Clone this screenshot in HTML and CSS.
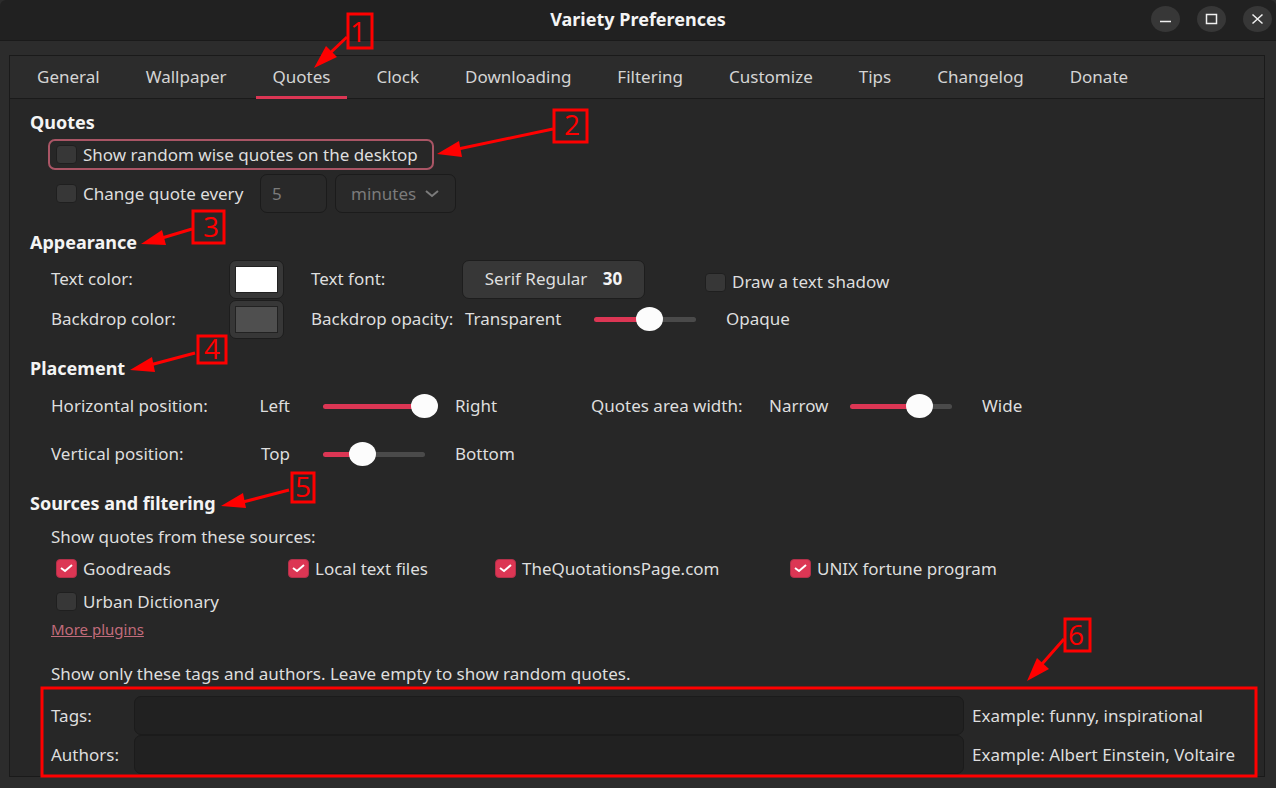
FILE: index.html
```html
<!DOCTYPE html>
<html lang="en">
<head>
    <meta charset="UTF-8">
    <meta name="viewport" content="width=device-width, initial-scale=1.0">
    <title>Variety Preferences</title>
    <link rel="stylesheet" href="styles.css">
</head>
<body>
    <header class="titlebar">
        <h1 class="title">Variety Preferences</h1>
        <div class="window-buttons">
            <button type="button" class="window-button" aria-label="Minimize">
                <svg width="29" height="26" viewBox="0 0 29 26"><path d="M9 15.5h11" /></svg>
            </button>
            <button type="button" class="window-button" aria-label="Maximize">
                <svg width="29" height="26" viewBox="0 0 29 26"><path d="M9.5 8.5h10v9h-10z" /></svg>
            </button>
            <button type="button" class="window-button" aria-label="Close">
                <svg width="29" height="26" viewBox="0 0 29 26"><path d="M9.5 8.5l10 9M19.5 8.5l-10 9" /></svg>
            </button>
        </div>
    </header>

    <main class="notebook">
        <nav class="tabs">
            <a href="#general" class="tab">General</a>
            <a href="#wallpaper" class="tab">Wallpaper</a>
            <a href="#quotes" class="tab active">Quotes</a>
            <a href="#clock" class="tab">Clock</a>
            <a href="#downloading" class="tab">Downloading</a>
            <a href="#filtering" class="tab">Filtering</a>
            <a href="#customize" class="tab">Customize</a>
            <a href="#tips" class="tab">Tips</a>
            <a href="#changelog" class="tab">Changelog</a>
            <a href="#donate" class="tab">Donate</a>
        </nav>

        <form class="page">
            <h2 class="heading">Quotes</h2>
            <label class="check focused"><input type="checkbox" class="box">Show random wise quotes on the desktop</label>
            <div class="interval">
                <label class="check"><input type="checkbox" class="box">Change quote every</label>
                <input type="text" class="entry number" value="5" aria-label="Interval" disabled>
                <div class="dropdown">
                    <select class="select" aria-label="Interval unit" disabled>
                        <option>minutes</option>
                    </select>
                    <svg class="chevron" width="16" height="10" viewBox="0 0 16 10"><path d="M2 2l6 5 6-5" /></svg>
                </div>
            </div>

            <h2 class="heading">Appearance</h2>
            <div class="appearance">
                <label for="text-color">Text color:</label>
                <input type="color" id="text-color" class="color" value="#ffffff">
                <label for="text-font">Text font:</label>
                <button type="button" id="text-font" class="font-button">Serif Regular <b>30</b></button>
                <label class="check shadow"><input type="checkbox" class="box">Draw a text shadow</label>

                <label for="backdrop-color">Backdrop color:</label>
                <input type="color" id="backdrop-color" class="color" value="#4f4f4f">
                <label for="opacity">Backdrop opacity:</label>
                <div class="opacity">
                    <span class="low">Transparent</span>
                    <span class="slider" style="--fill: 54%"><input type="range" id="opacity" value="54"></span>
                    <span class="high">Opaque</span>
                </div>
            </div>

            <h2 class="heading">Placement</h2>
            <div class="placement">
                <label for="horizontal">Horizontal position:</label>
                <span class="side">Left</span>
                <span class="slider" style="--fill: 100%"><input type="range" id="horizontal" value="100"></span>
                <span>Right</span>
                <label for="area-width">Quotes area width:</label>
                <span>Narrow</span>
                <span class="slider" style="--fill: 68%"><input type="range" id="area-width" value="68"></span>
                <span>Wide</span>

                <label for="vertical">Vertical position:</label>
                <span class="side">Top</span>
                <span class="slider" style="--fill: 39%"><input type="range" id="vertical" value="39"></span>
                <span>Bottom</span>
            </div>

            <h2 class="heading">Sources and filtering</h2>
            <p class="text">Show quotes from these sources:</p>
            <div class="sources">
                <label class="check"><input type="checkbox" class="box" checked>Goodreads</label>
                <label class="check"><input type="checkbox" class="box" checked>Local text files</label>
                <label class="check"><input type="checkbox" class="box" checked>TheQuotationsPage.com</label>
                <label class="check"><input type="checkbox" class="box" checked>UNIX fortune program</label>
                <label class="check"><input type="checkbox" class="box">Urban Dictionary</label>
            </div>
            <a href="#plugins" class="link">More plugins</a>
            <p class="text hint">Show only these tags and authors. Leave empty to show random quotes.</p>
            <div class="filters">
                <label for="tags">Tags:</label>
                <input type="text" id="tags" class="entry">
                <span class="example">Example: funny, inspirational</span>
                <label for="authors">Authors:</label>
                <input type="text" id="authors" class="entry">
                <span class="example">Example: Albert Einstein, Voltaire</span>
            </div>
        </form>
    </main>

    <!-- numbered callouts -->
    <svg class="callouts" width="1276" height="788" viewBox="0 0 1276 788">
        <g class="frame">
            <rect x="348" y="14" width="24" height="34" />
            <rect x="554" y="110" width="33" height="32" />
            <rect x="193" y="211" width="31" height="32" />
            <rect x="198" y="336" width="28" height="27" />
            <rect x="292" y="473" width="22" height="29" />
            <rect x="1065" y="619" width="25" height="32" />
            <rect x="42" y="688" width="1214" height="88" />
            <path d="M347 37L328 55M553 129L458 149M192 229L162 238M195 353L150 365M289 490L243 502M1064 639L1042 664" />
        </g>
        <g class="head">
            <path d="M314 68l12-22 11 11z" />
            <path d="M437 154l22-13 3 16z" />
            <path d="M141 244l21-14 4 15z" />
            <path d="M130 370l22-13 3 15z" />
            <path d="M221 506l22-13 3 15z" />
            <path d="M1027 681l10-23 12 11z" />
        </g>
        <g class="digit">
            <text x="358" y="42">1</text>
            <text x="572" y="135">2</text>
            <text x="211" y="237">3</text>
            <text x="212" y="359">4</text>
            <text x="303" y="497">5</text>
            <text x="1076" y="645">6</text>
        </g>
    </svg>
</body>
</html>
```
FILE: styles.css
```css
* {
    box-sizing: border-box;
}
body {
    margin: 0;
    min-height: 100vh;
    position: relative;
    display: flex;
    flex-direction: column;
    background-color: #2c2c2c;
    color: #dedede;
    font-family: 'Noto Sans', 'Open Sans', sans-serif;
    font-size: 17px;
    line-height: 24px;
}
input, select, button {
    font: inherit;
    color: inherit;
    margin: 0;
}

/* title bar */
.titlebar {
    display: grid;
    grid-template-columns: 1fr auto 1fr;
    align-items: center;
    height: 41px;
    padding: 0 4px 3px;
    background-color: #212121;
    border-bottom: 1px solid #1a1a1a;
    border-radius: 6px 6px 0 0;
}
.title {
    grid-column: 2;
    margin: 0;
    font-size: 18px;
    color: #f4f4f4;
}
.window-buttons {
    display: flex;
    justify-content: flex-end;
    gap: 17px;
}
.window-button {
    width: 29px;
    height: 26px;
    padding: 0;
    border: 0;
    border-radius: 50%;
    background-color: #373737;
}
.window-button svg {
    display: block;
    fill: none;
    stroke: #f0f0f0;
    stroke-width: 1.5;
}

/* notebook */
.notebook {
    flex: 1;
    display: flex;
    flex-direction: column;
    margin: 14px 11px 11px 9px;
    border: 1px solid #1a1a1a;
    background-color: #272727;
}
.tabs {
    display: flex;
    gap: 12px;
    height: 43px;
    padding: 0 10px;
    background-color: #2c2c2c;
    border-bottom: 1px solid #1a1a1a;
}
.tab {
    padding: 9px 17px;
    margin-bottom: -1px;
    color: #d4d4d4;
    text-decoration: none;
}
.tab.active {
    border-bottom: 3px solid #dc3654;
}
.page {
    padding: 11px 0 0 20px;
}
.heading {
    margin: 17px 0 0;
    font-size: 18px;
    color: #f4f4f4;
}
.heading:first-child {
    margin-top: 0;
}
.text {
    margin: 10px 0 3px 21px;
}

/* check boxes */
.check {
    display: flex;
    align-items: center;
    gap: 6px;
}
.box {
    appearance: none;
    flex: none;
    width: 21px;
    height: 19px;
    border: 1px solid #1f1f1f;
    border-radius: 4px;
    background-color: #373737;
}
.box:checked {
    border-color: #b33049;
    background: #dc3654 url("data:image/svg+xml,%3Csvg xmlns='http://www.w3.org/2000/svg' width='19' height='17' viewBox='0 0 19 17'%3E%3Cpath d='M4 8l4 3 7-6' fill='none' stroke='white' stroke-width='2'/%3E%3C/svg%3E") center no-repeat;
}
.check.focused {
    width: fit-content;
    height: 31px;
    margin: 5px 0 4px 18px;
    padding: 0 14px 0 6px;
    border: 2px solid #a95565;
    border-radius: 7px;
}

.interval {
    display: flex;
    align-items: center;
    gap: 8px;
    padding-left: 26px;
}
.interval .check {
    width: 196px;
}
.entry {
    min-width: 0;
    height: 39px;
    padding: 0 11px;
    border: 1px solid #1b1b1b;
    border-radius: 7px;
    background-color: #212121;
}
.number {
    width: 67px;
}
.number:disabled, .select:disabled {
    background-color: #292929;
    color: #7b7b7b;
    opacity: 1;
}
.dropdown {
    display: grid;
    align-items: center;
}
.select {
    grid-area: 1 / 1;
    appearance: none;
    width: 121px;
    height: 39px;
    padding: 0 15px;
    border: 1px solid #1b1b1b;
    border-radius: 7px;
}
.chevron {
    grid-area: 1 / 1;
    justify-self: end;
    margin-right: 16px;
    fill: none;
    stroke: #7b7b7b;
    stroke-width: 2;
    pointer-events: none;
}

/* appearance */
.appearance {
    display: grid;
    grid-template-columns: 178px 82px 151px 243px 1fr;
    grid-auto-rows: 40px;
    align-items: center;
    margin: 5px 0 0 21px;
}
.color {
    appearance: none;
    width: 55px;
    height: 39px;
    padding: 5px;
    border: 1px solid #1d1d1d;
    border-radius: 7px;
    background-color: #373737;
}
.color::-webkit-color-swatch-wrapper {
    padding: 0;
}
.color::-webkit-color-swatch {
    border: 1px solid #222;
    border-radius: 0;
}
.font-button {
    width: 183px;
    height: 39px;
    padding: 0;
    border: 1px solid #1d1d1d;
    border-radius: 7px;
    background-color: #373737;
}
.font-button b {
    margin-left: 11px;
    color: #f4f4f4;
}
.shadow {
    padding-top: 6px;
}
.opacity {
    grid-column: 4 / 6;
    display: flex;
    align-items: center;
    padding-left: 3px;
}
.low {
    width: 129px;
}
.high {
    margin-left: 30px;
}

/* the knob overhangs the trough by half its width at both ends */
.slider {
    display: flex;
    align-items: center;
    width: 102px;
    height: 5px;
    border-radius: 3px;
    background: linear-gradient(to right, #dc3654 var(--fill), #4a4a4a var(--fill));
}
.slider input {
    appearance: none;
    flex: none;
    width: 128px;
    height: 24px;
    margin: 0 -13px;
    background: transparent;
}
.slider input::-webkit-slider-thumb {
    appearance: none;
    width: 27px;
    height: 24px;
    border-radius: 50%;
    background-color: #fcfcfc;
}

/* placement */
.placement {
    display: grid;
    grid-template-columns: 190px 82px 132px 136px 178px 81px 132px 1fr;
    grid-auto-rows: 48px;
    align-items: center;
    margin: 2px 0 0 21px;
}
.side {
    padding-right: 33px;
    text-align: right;
}
.placement + .heading {
    margin-top: 13px;
}

/* sources and filtering */
.sources {
    display: grid;
    grid-template-columns: 232px 207px 295px 1fr;
    grid-auto-rows: 33px;
    padding-left: 26px;
}
.link {
    display: block;
    width: fit-content;
    margin-left: 21px;
    font-size: 15px;
    line-height: 22px;
    color: #c26c7b;
}
.hint {
    margin: 22px 0 10px 21px;
}
.filters {
    display: grid;
    grid-template-columns: 83px 1fr 292px;
    align-items: center;
    padding-left: 21px;
}
.filters .entry {
    margin-right: 8px;
}

/* callouts */
.callouts {
    position: absolute;
    top: 0;
    left: 0;
    pointer-events: none;
}
.frame {
    fill: none;
    stroke: #f00;
    stroke-width: 3;
}
.head {
    fill: #f00;
}
.digit {
    fill: #f00;
    font-family: 'Open Sans', 'Noto Sans', sans-serif;
    font-size: 28px;
    text-anchor: middle;
}
```
